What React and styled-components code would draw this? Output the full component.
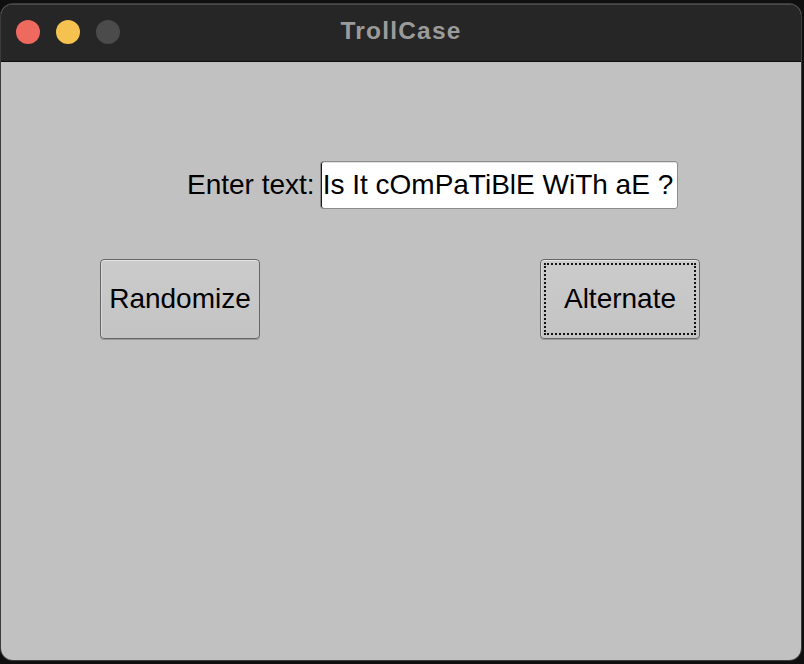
import React from 'react';
import styled, { createGlobalStyle } from 'styled-components';

const GlobalStyle = createGlobalStyle`
  html, body {
    margin: 0;
    padding: 0;
    background: #0f0f0f;
  }
  body {
    width: 804px;
    height: 664px;
    overflow: hidden;
  }
`;

const Desktop = styled.div`
  width: 804px;
  height: 664px;
  padding: 4px 3px 4px 1px;
  box-sizing: border-box;
`;

const Window = styled.div`
  width: 800px;
  height: 656px;
  border-radius: 12px;
  overflow: hidden;
  display: flex;
  flex-direction: column;
  background: #c1c1c1;
  box-shadow: 0 0 0 1px #3c3c3c;
`;

const TitleBar = styled.div`
  height: 56px;
  flex: none;
  background: #262626;
  border-bottom: 1px solid #0c0c0c;
  box-shadow: inset 0 1px 0 #4a4a4a;
  display: grid;
  grid-template-columns: 1fr auto 1fr;
  align-items: center;
  padding: 0 15px;
  padding-bottom: 1px;
`;

const Lights = styled.div`
  display: flex;
  gap: 16px;
  align-items: center;
`;

const Light = styled.span`
  width: 24px;
  height: 24px;
  border-radius: 50%;
  background: ${(p) => p.color};
`;

const Title = styled.div`
  font-family: 'Liberation Sans', Arial, sans-serif;
  font-weight: bold;
  font-size: 24.5px;
  letter-spacing: 1.2px;
  color: #9b9b9b;
  margin-top: -2px;
`;

const Body = styled.div`
  flex: 1;
  display: flex;
  flex-direction: column;
  font-family: 'Liberation Sans', Arial, sans-serif;
  font-size: 28px;
  color: #000;
`;

const InputRow = styled.div`
  display: flex;
  align-items: center;
  margin-top: 99px;
  padding-left: 186px;
  gap: 5px;
`;

const Label = styled.label`
  line-height: 48px;
`;

const Entry = styled.input`
  width: 358px;
  height: 48px;
  box-sizing: border-box;
  border: 1px solid #8c8c8c;
  border-radius: 3px;
  background: #fff;
  box-shadow: inset 1px 0 0 #1a1a1a, inset 0 1px 0 #e2e2e2;
  padding: 0 0 0 2px;
  font: inherit;
  color: #000;
  outline: none;
`;

const ButtonRow = styled.div`
  display: flex;
  justify-content: space-between;
  margin-top: 50px;
  padding: 0 101px 0 99px;
`;

const Button = styled.button`
  position: relative;
  width: 160px;
  height: 80px;
  box-sizing: border-box;
  border: 1px solid #666;
  border-radius: 4px;
  background: linear-gradient(#cbcbcb, #c4c4c4);
  box-shadow: inset 0 1px 0 #e4e4e4, inset 1px 0 0 #d8d8d8, 0 1px 0 #9a9a9a;
  font: inherit;
  color: #000;
  padding: 0;
  cursor: pointer;

  &::after {
    content: '';
    display: ${(p) => (p.$focused ? 'block' : 'none')};
    position: absolute;
    inset: 3px;
    border: 2px dotted #111;
  }
`;

export default function App() {
  return (
    <Desktop>
      <GlobalStyle />
      <Window>
        <TitleBar>
          <Lights>
            <Light color="#ee6a5f" />
            <Light color="#f5c24f" />
            <Light color="#4b4b4b" />
          </Lights>
          <Title>TrollCase</Title>
          <span />
        </TitleBar>
        <Body>
          <InputRow>
            <Label htmlFor="text">Enter text:</Label>
            <Entry id="text" defaultValue="Is It cOmPaTiBlE WiTh aE ?" />
          </InputRow>
          <ButtonRow>
            <Button>Randomize</Button>
            <Button $focused>Alternate</Button>
          </ButtonRow>
        </Body>
      </Window>
    </Desktop>
  );
}
